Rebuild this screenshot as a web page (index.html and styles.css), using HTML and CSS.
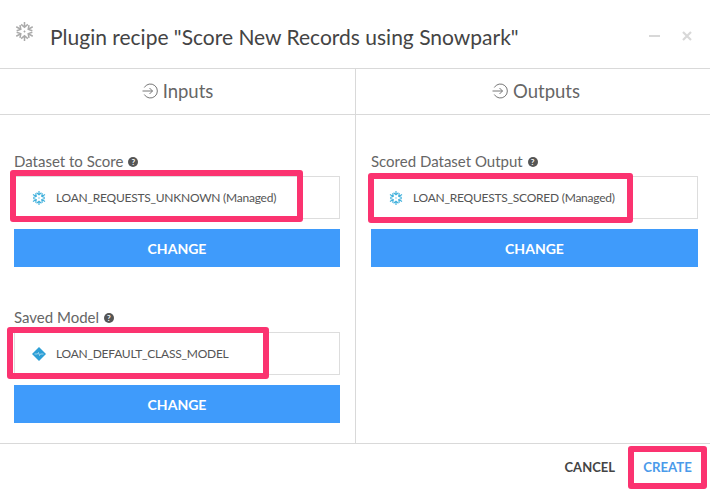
FILE: index.html
```html
<!DOCTYPE html>
<html lang="en">
<head>
    <meta charset="UTF-8">
    <title>Plugin recipe</title>
    <link rel="stylesheet" href="styles.css">
</head>
<body>
    <svg width="0" height="0" class="defs">
        <symbol id="flake" viewBox="0 0 20 20">
            <g fill="none" stroke="currentColor" stroke-width="1.600">
                <path id="arm" d="M10 0v5.500M6.500 2.500l3.500 3 3.500-3"/>
                <use href="#arm" transform="rotate(60 10 10)"/>
                <use href="#arm" transform="rotate(120 10 10)"/>
                <use href="#arm" transform="rotate(180 10 10)"/>
                <use href="#arm" transform="rotate(240 10 10)"/>
                <use href="#arm" transform="rotate(300 10 10)"/>
            </g>
            <path d="M10 8.800l1.200 1.200-1.200 1.200-1.200-1.200z" fill="currentColor"/>
        </symbol>
        <symbol id="enter" viewBox="0 0 16 16">
            <path d="M2.300 4.500A7 7 0 1 1 2.300 11.500" fill="none" stroke="currentColor" stroke-width="1"/>
            <path d="M.5 8h10M7.500 5l3 3-3 3" fill="none" stroke="currentColor" stroke-width="1"/>
        </symbol>
    </svg>

    <header class="title-bar">
        <svg class="title-icon"><use href="#flake"/></svg>
        <h1>Plugin recipe "Score New Records using Snowpark"</h1>
        <span class="win-btn win-min"></span>
        <svg class="win-close" viewBox="0 0 10 10"><path d="M1 1l8 8M9 1l-8 8"/></svg>
    </header>

    <main class="columns">
        <section class="column">
            <div class="tab"><svg class="tab-icon"><use href="#enter"/></svg>Inputs</div>
            <div class="fields">
                <div class="field">
                    <label>Dataset to Score <span class="help">?</span></label>
                    <div class="picker">
                        <svg class="flake"><use href="#flake"/></svg>
                        LOAN_REQUESTS_UNKNOWN (Managed)
                        <span class="mark mark-dataset"></span>
                    </div>
                    <button class="change">CHANGE</button>
                </div>
                <div class="field">
                    <label>Saved Model <span class="help">?</span></label>
                    <div class="picker">
                        <svg class="model" viewBox="0 0 14 14">
                            <path d="M7 0l7 7-7 7-7-7z" fill="#2d9fd6"/>
                            <path d="M2.500 7h3l1-1.500 1 3 1-1.500h3" fill="none" stroke="#cdeaf7" stroke-width=".7"/>
                        </svg>
                        LOAN_DEFAULT_CLASS_MODEL
                        <span class="mark mark-model"></span>
                    </div>
                    <button class="change">CHANGE</button>
                </div>
            </div>
        </section>
        <section class="column column-right">
            <div class="tab"><svg class="tab-icon"><use href="#enter"/></svg>Outputs</div>
            <div class="fields">
                <div class="field">
                    <label>Scored Dataset Output <span class="help">?</span></label>
                    <div class="picker">
                        <svg class="flake"><use href="#flake"/></svg>
                        LOAN_REQUESTS_SCORED (Managed)
                        <span class="mark mark-output"></span>
                    </div>
                    <button class="change">CHANGE</button>
                </div>
            </div>
        </section>
    </main>

    <footer class="actions">
        <button class="action">CANCEL</button>
        <button class="action action-create">CREATE<span class="mark mark-create"></span></button>
    </footer>
</body>
</html>
```

FILE: styles.css
```css
* {
    box-sizing: border-box;
}
html, body {
    height: 100%;
}
body {
    margin: 0;
    width: 710px;
    height: 490px;
    overflow: hidden;
    display: flex;
    flex-direction: column;
    background-color: #fff;
    font-family: Lato, "Noto Sans", sans-serif;
    color: #555;
}
.defs {
    position: absolute;
}
.title-bar {
    height: 69px;
    flex: none;
    display: flex;
    align-items: center;
    padding: 4px 18px 0 15px;
    border-bottom: 1px solid #d9d9d9;
    color: #444;
}
.title-icon {
    width: 19px;
    height: 19px;
    margin: -10px 16px 0 0;
    color: #aaa;
}
h1 {
    flex: 1;
    margin: 0;
    font-size: 21px;
    font-weight: 400;
    color: #444;
}
.win-min {
    width: 11px;
    height: 2px;
    margin-right: 22px;
    background-color: #d8d8d8;
}
.win-close {
    width: 10px;
    height: 10px;
    fill: none;
    stroke: #d8d8d8;
    stroke-width: 2.200;
}
.columns {
    flex: 1;
    display: flex;
}
.column {
    width: 355px;
    flex: none;
}
.column-right {
    flex: 1;
    border-left: 1px solid #d9d9d9;
}
.tab {
    height: 46px;
    display: flex;
    align-items: center;
    justify-content: center;
    gap: 5px;
    padding-bottom: 2px;
    border-bottom: 1px solid #d9d9d9;
    font-size: 18.500px;
    color: #666;
}
.column-right .tab {
    padding-left: 6px;
}
.tab-icon {
    width: 16px;
    height: 16px;
    color: #777;
}
.fields {
    padding: 37px 15px 0 14px;
    display: flex;
    flex-direction: column;
    gap: 41px;
}
.column-right .fields {
    padding: 37px 12px 0 15px;
}
label {
    display: block;
    height: 24px;
    font-size: 15px;
    line-height: 18px;
    color: #666;
}
.help {
    display: inline-block;
    width: 10px;
    height: 10px;
    margin-left: 1px;
    border-radius: 50%;
    background-color: #555;
    color: #fff;
    font-size: 8px;
    font-weight: 700;
    line-height: 10px;
    text-align: center;
    vertical-align: 2px;
}
.picker {
    position: relative;
    height: 43px;
    display: flex;
    align-items: center;
    gap: 10px;
    padding-left: 17px;
    border: 1px solid #ddd;
    font-size: 12px;
    letter-spacing: -0.24px;
    color: #555;
}
.flake {
    width: 14px;
    height: 14px;
    color: #3fb0dc;
}
.model {
    width: 14px;
    height: 14px;
}
.change {
    display: block;
    width: 100%;
    height: 38px;
    margin-top: 10px;
    border: none;
    background-color: #3f9bfb;
    color: #fff;
    font-family: inherit;
    font-size: 14px;
    font-weight: 700;
}
.mark {
    position: absolute;
    border: 6px solid #fb3370;
    border-radius: 3px;
    pointer-events: none;
}
.mark-dataset {
    left: -5px;
    top: -7px;
    width: 293px;
    height: 52px;
}
.mark-model {
    left: -8px;
    top: -6px;
    width: 262px;
    height: 52px;
}
.mark-output {
    left: -4px;
    top: -4px;
    width: 265px;
    height: 50px;
}
.mark-create {
    left: -1px;
    top: -1px;
    width: 79px;
    height: 43px;
}
.actions {
    height: 47px;
    flex: none;
    display: flex;
    align-items: center;
    justify-content: flex-end;
    padding-right: 4px;
    border-top: 1px solid #d9d9d9;
}
.action {
    position: relative;
    height: 41px;
    padding: 0 14px 0 16px;
    border: none;
    background: none;
    font-family: inherit;
    font-size: 13px;
    font-weight: 700;
    color: #444;
}
.action-create {
    width: 77px;
    padding: 0;
    font-size: 13.200px;
    color: #4a9aea;
}
```
